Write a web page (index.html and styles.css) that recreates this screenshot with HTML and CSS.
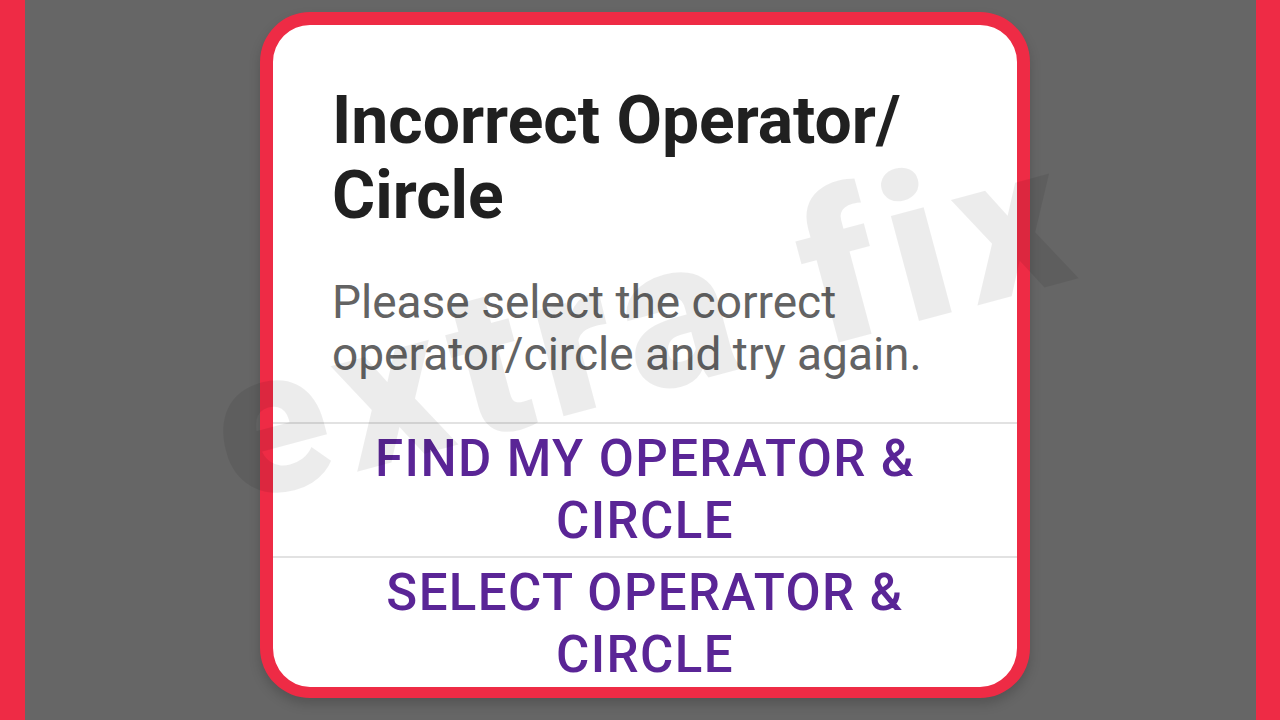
FILE: index.html
```html
<!DOCTYPE html>
<html lang="en">
<head>
<meta charset="utf-8">
<title>Incorrect Operator/Circle</title>
<link rel="stylesheet" href="styles.css">
</head>
<body>
<div class="frame">
  <div class="bar"></div>
  <main class="stage">
    <section class="dialog">
      <div class="content">
        <h1 class="title">Incorrect Operator/<br>Circle</h1>
        <p class="message">Please select the correct<br>operator/circle and try again.</p>
      </div>
      <div class="actions">
        <button class="action">FIND MY OPERATOR &amp;<br>CIRCLE</button>
        <button class="action">SELECT OPERATOR &amp;<br>CIRCLE</button>
      </div>
    </section>
  </main>
  <div class="bar"></div>
</div>
<div class="watermark">extra fix</div>
</body>
</html>
```
FILE: styles.css
```css
html, body {
  margin: 0;
  padding: 0;
}
body {
  width: 1280px;
  height: 720px;
  overflow: hidden;
  background: #666666;
  font-family: Roboto, "Liberation Sans", sans-serif;
  position: relative;
}
.frame {
  display: flex;
  height: 720px;
}
.bar {
  width: 25px;
  background: #ee2b45;
  flex: none;
}
.bar:last-child {
  width: 24px;
}
.stage {
  flex: 1;
  padding: 12px 0 0 235px;
  box-sizing: border-box;
}
.dialog {
  width: 770px;
  height: 686px;
  box-sizing: border-box;
  border: 13px solid #ee2b45;
  border-bottom-width: 11px;
  border-radius: 50px;
  background: #ffffff;
  overflow: hidden;
  display: flex;
  flex-direction: column;
  box-shadow: 0 6px 12px rgba(0, 0, 0, 0.18);
}
.content {
  padding: 58px 40px 0 59px;
}
.title {
  margin: 0;
  font-size: 66px;
  line-height: 75px;
  font-weight: 700;
  color: #202020;
}
.message {
  margin: 43px 0 0;
  font-size: 46px;
  line-height: 52px;
  font-weight: 400;
  color: #636363;
}
.actions {
  margin-top: 42px;
  display: flex;
  flex-direction: column;
}
.action {
  display: block;
  width: 100%;
  border: 0;
  border-top: 2px solid #e2e2e2;
  background: transparent;
  padding: 4px 0 4px;
  margin: 0;
  font-family: Roboto, "Liberation Sans", sans-serif;
  font-size: 51px;
  line-height: 62px;
  font-weight: 500;
  letter-spacing: 1.4px;
  color: #5a2596;
  text-align: center;
}
.watermark {
  position: absolute;
  left: 645px;
  top: 322px;
  transform: translate(-50%, -50%) rotate(-15deg);
  font-family: Roboto, "DejaVu Sans", sans-serif;
  font-weight: 900;
  font-size: 206px;
  letter-spacing: 14px;
  line-height: 1;
  white-space: nowrap;
  color: rgba(0, 0, 0, 0.075);
  pointer-events: none;
}
```
